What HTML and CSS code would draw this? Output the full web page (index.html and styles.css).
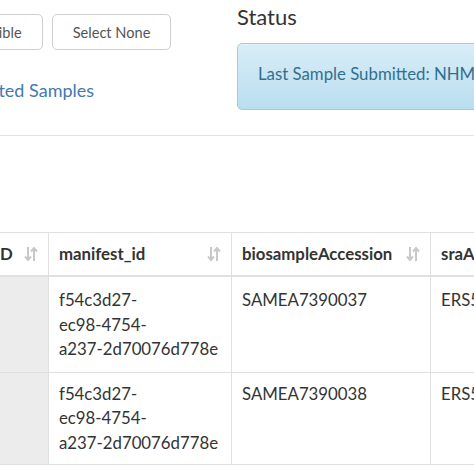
FILE: index.html
```html
<!DOCTYPE html>
<html>
<head>
<meta charset="utf-8">
<link rel="stylesheet" href="styles.css">
</head>
<body>
<div class="page">
  <div class="top">
    <div class="left">
      <div class="btns">
        <button class="btn">Select All Visible</button>
        <button class="btn">Select None</button>
      </div>
      <a class="link" href="#">Submit Selected Samples</a>
    </div>
    <div class="right">
      <h3 class="title">Status</h3>
      <div class="alert">Last Sample Submitted: NHMUK010000000</div>
    </div>
  </div>
  <hr class="rule">
  <table class="grid">
    <colgroup>
      <col class="c1"><col class="c2"><col class="c3"><col class="c4">
    </colgroup>
    <thead>
      <tr>
        <th><span class="th">ID<svg class="sort" viewBox="0 0 14 16"><path d="M4 1v13M1 10.5l3 3.5 3-3.5M10 15V2M7 5.5l3-3.5 3 3.5" fill="none" stroke="#c8c8c8" stroke-width="2"/></svg></span></th>
        <th><span class="th">manifest_id<svg class="sort" viewBox="0 0 14 16"><path d="M4 1v13M1 10.5l3 3.5 3-3.5M10 15V2M7 5.5l3-3.5 3 3.5" fill="none" stroke="#c8c8c8" stroke-width="2"/></svg></span></th>
        <th><span class="th">biosampleAccession<svg class="sort" viewBox="0 0 14 16"><path d="M4 1v13M1 10.5l3 3.5 3-3.5M10 15V2M7 5.5l3-3.5 3 3.5" fill="none" stroke="#c8c8c8" stroke-width="2"/></svg></span></th>
        <th><span class="th">sraAccession<svg class="sort" viewBox="0 0 14 16"><path d="M4 1v13M1 10.5l3 3.5 3-3.5M10 15V2M7 5.5l3-3.5 3 3.5" fill="none" stroke="#c8c8c8" stroke-width="2"/></svg></span></th>
      </tr>
    </thead>
    <tbody>
      <tr class="r1">
        <td class="sorted">1</td>
        <td>f54c3d27-<br>ec98-4754-<br>a237-2d70076d778e</td>
        <td>SAMEA7390037</td>
        <td>ERS5219937</td>
      </tr>
      <tr class="r2">
        <td class="sorted">2</td>
        <td>f54c3d27-<br>ec98-4754-<br>a237-2d70076d778e</td>
        <td>SAMEA7390038</td>
        <td>ERS5219938</td>
      </tr>
    </tbody>
  </table>
</div>
</body>
</html>
```
FILE: styles.css
```css
html, body {
  margin: 0;
  padding: 0;
  background: #fff;
  overflow: hidden;
  width: 474px;
  height: 474px;
}
body {
  font-family: Lato, "Open Sans", sans-serif;
  color: #333;
}
.page {
  width: 474px;
}
.top {
  display: grid;
  grid-template-columns: 341px 400px;
  margin-left: -104px;
}
.btns {
  display: flex;
  gap: 9px;
  margin-top: 14px;
}
.btn {
  height: 36px;
  padding: 0 20px;
  background: #fff;
  border: 1px solid #cfcfcf;
  border-radius: 5px;
  font-family: Lato, sans-serif;
  font-size: 14.6px;
  color: #555;
}
.link {
  display: block;
  margin-top: 28px;
  margin-left: 1px;
  font-size: 18px;
  line-height: 24px;
  color: #4279b0;
  text-decoration: none;
}
.title {
  margin: 4px 0 0;
  font-size: 22px;
  line-height: 26px;
  font-weight: 400;
  color: #333;
}
.alert {
  margin-top: 13px;
  padding: 19px 20px 24px;
  line-height: 22px;
  font-size: 16.8px;
  color: #31708f;
  background: linear-gradient(to bottom, #d9edf7 0, #b9def0 100%);
  border: 1px solid #9acfea;
  border-radius: 5px;
  box-shadow: inset 0 1px 0 rgba(255,255,255,.25);
  white-space: nowrap;
}
.rule {
  margin: 25px 0 0;
  border: 0;
  border-top: 1px solid #e3e3e3;
  height: 0;
}
.grid {
  margin-top: 96px;
  margin-left: -16px;
  border-collapse: collapse;
  table-layout: fixed;
  width: 646px;
  font-size: 16.8px;
}
.c1 { width: 64px; }
.c2 { width: 183px; }
.c3 { width: 199px; }
.c4 { width: 200px; }
.grid th, .grid td {
  border: 1px solid #e0e0e0;
  text-align: left;
  vertical-align: top;
  padding: 10px 10px;
}
.grid th {
  border-bottom: 2px solid #e0e0e0;
  font-weight: 700;
  line-height: 22px;
}
.th {
  display: flex;
  justify-content: space-between;
  align-items: center;
}
.sort {
  width: 14px;
  height: 16px;
  flex: none;
}
.grid td {
  line-height: 24.5px;
  color: #333;
}
.r1 td { padding-top: 11px; padding-bottom: 10px; }
.r2 td { padding-top: 9px; padding-bottom: 9px; }
.grid td.sorted {
  background: #ececec;
  color: transparent;
}
```
